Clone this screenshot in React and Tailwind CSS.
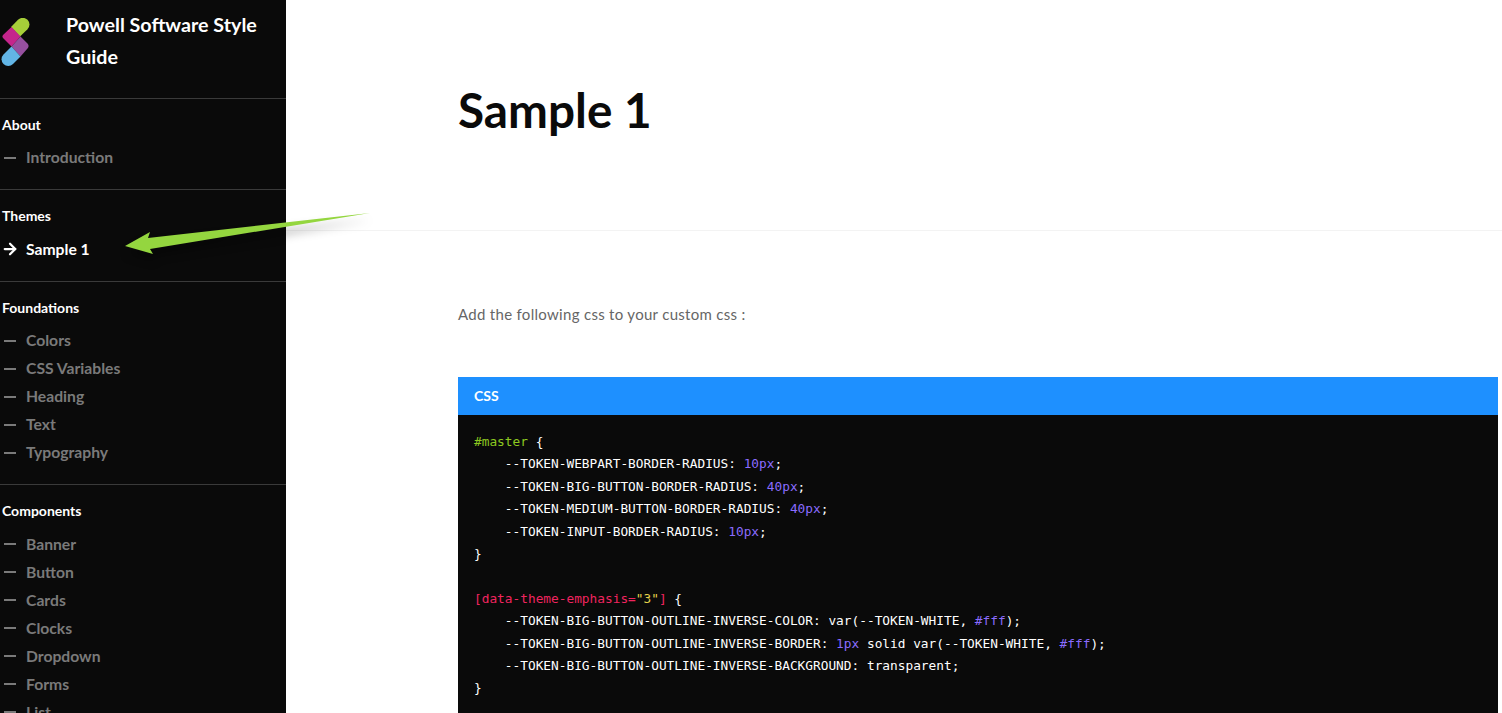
import React from "react";
import { ArrowRight } from "lucide-react";

const sections = [
  { title: "About", items: ["Introduction"] },
  { title: "Themes", items: ["Sample 1"], active: "Sample 1" },
  { title: "Foundations", items: ["Colors", "CSS Variables", "Heading", "Text", "Typography"] },
  { title: "Components", items: ["Banner", "Button", "Cards", "Clocks", "Dropdown", "Forms", "List"] },
];

const P = ({ children }) => <span className="text-[#8a6cff]">{children}</span>;

function Logo() {
  return (
    <svg width="30" height="50" viewBox="0 18 30 50" className="shrink-0">
      <path d="M11 27 L18 19.8 A6.7 6.7 0 0 1 27.5 29.3 L20 36.5 Z" fill="#a6ce39" />
      <path d="M11.5 27 L20.5 36.5 L11.5 46.5 L3.5 38.5 Q1.3 36.3 3.5 34.5 Z" fill="#c5258c" />
      <path d="M20.5 36.5 L27.5 43.5 Q29.7 46 27.5 48.5 L20.5 56.5 L11.5 46.5 Z" fill="#96509f" />
      <path d="M20.5 56.5 L13 64 A6.7 6.7 0 0 1 3.5 54.5 L11.5 46.5 Z" fill="#62b5e5" />
    </svg>
  );
}

function Sidebar() {
  return (
    <aside className="w-[286px] shrink-0 h-full overflow-hidden bg-[#0a0a0a]">
      <div className="h-[97.8px] flex gap-[36px] pt-[9px] pr-[20px]">
        <div className="pt-[9px]">
          <Logo />
        </div>
        <h2 className="text-white font-bold text-[19.7px] leading-[31.5px]">Powell Software Style Guide</h2>
      </div>
      {sections.map((s) => (
        <div key={s.title} className="border-t border-[#3a3a3a] pt-[17px] pb-[17.5px] pl-[2px]">
          <div className="text-white font-bold text-[14px] leading-[18px] mb-[10px]">{s.title}</div>
          <ul>
            {s.items.map((item) => (
              <li
                key={item}
                className={`h-[28px] flex items-center text-[15.7px] font-bold ${
                  s.active === item ? "text-white" : "text-[#7a7a7a]"
                }`}
              >
                <span className="w-[24px] flex items-center pl-[2px]">
                  {s.active === item ? (
                    <ArrowRight size={18} strokeWidth={3} className="-ml-[3px] shrink-0" />
                  ) : (
                    <span className="block w-[12px] h-[2px] bg-[#7a7a7a]" />
                  )}
                </span>
                {item}
              </li>
            ))}
          </ul>
        </div>
      ))}
    </aside>
  );
}

function CodeBlock() {
  return (
    <div className="mr-[4px]">
      <div className="h-[38px] bg-[#1e90ff] flex items-center px-[16px] pb-[2px] text-white text-[14px] font-bold">CSS</div>
      <pre className="bg-[#0a0a0a] text-white pt-[16px] px-[16px] pb-[40px] text-[12.8px] leading-[22.4px] font-['DejaVu_Sans_Mono',monospace]">
        <span className="text-[#8cc820]">#master</span> {"{"}
        {"\n    --TOKEN-WEBPART-BORDER-RADIUS: "}<P>10px</P>;
        {"\n    --TOKEN-BIG-BUTTON-BORDER-RADIUS: "}<P>40px</P>;
        {"\n    --TOKEN-MEDIUM-BUTTON-BORDER-RADIUS: "}<P>40px</P>;
        {"\n    --TOKEN-INPUT-BORDER-RADIUS: "}<P>10px</P>;
        {"\n}\n\n"}
        <span className="text-[#f0245f]">[data-theme-emphasis=<span className="text-[#e6d24a]">"3"</span>]</span> {"{"}
        {"\n    --TOKEN-BIG-BUTTON-OUTLINE-INVERSE-COLOR: var(--TOKEN-WHITE, "}<P>#fff</P>);
        {"\n    --TOKEN-BIG-BUTTON-OUTLINE-INVERSE-BORDER: "}<P>1px</P>{" solid var(--TOKEN-WHITE, "}<P>#fff</P>);
        {"\n    --TOKEN-BIG-BUTTON-OUTLINE-INVERSE-BACKGROUND: transparent;"}
        {"\n}"}
      </pre>
    </div>
  );
}

export default function App() {
  return (
    <div className="relative h-screen flex overflow-hidden bg-white font-['Lato',sans-serif]">
      <Sidebar />
      <main className="flex-1 min-w-0">
        <header className="h-[231px] border-b border-[#f3f3f3] pl-[172px] pt-[78px]">
          <h1 className="text-[47.7px] leading-[64px] font-bold text-[#0a0a0a]">Sample 1</h1>
        </header>
        <div className="pl-[172px]">
          <p className="mt-[72px] mb-[52px] text-[15px] leading-[22px] tracking-[0.3px] text-[#666666]">
            Add the following css to your custom css :
          </p>
          <CodeBlock />
        </div>
      </main>
      {/* green annotation arrow drawn over the screenshot */}
      <svg
        width="260"
        height="60"
        viewBox="120 205 260 60"
        className="absolute left-[120px] top-[205px] drop-shadow-[2px_7px_5px_rgba(0,0,0,0.35)]"
      >
        <polygon points="125,246 150,232 148,238 370,213 150,249 153,254" fill="#94d63f" />
      </svg>
    </div>
  );
}
